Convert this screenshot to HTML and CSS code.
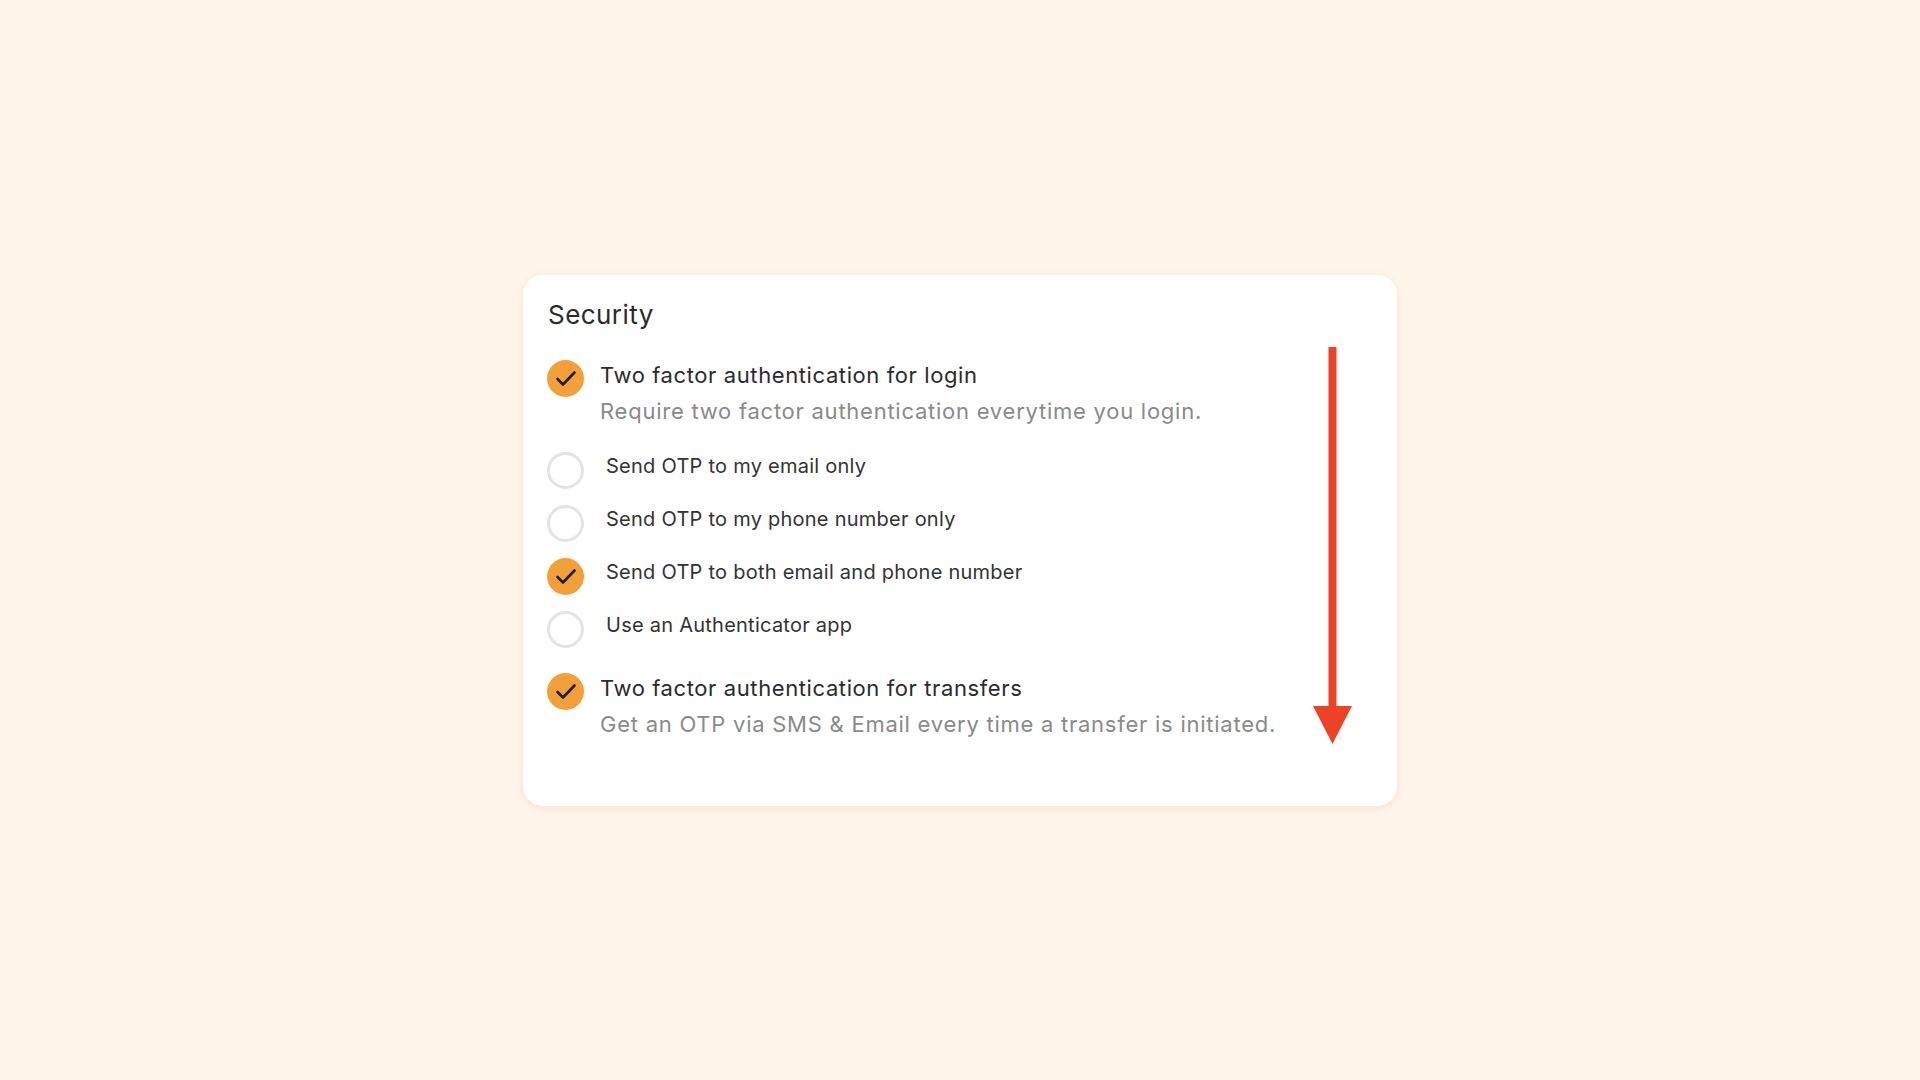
FILE: index.html
```html
<!DOCTYPE html>
<html lang="en">
<head>
    <meta charset="UTF-8">
    <meta name="viewport" content="width=device-width, initial-scale=1.0">
    <title>Security</title>
    <link rel="stylesheet" href="styles.css">
</head>
<body>
    <div class="card">
        <h2>Security</h2>

        <div class="option">
            <span class="check checked">
                <svg viewBox="0 0 37 37"><path d="M10.5 19 L16 24.5 L27.5 12.5"/></svg>
            </span>
            <div class="option-text">
                <p class="option-title">Two factor authentication for login</p>
                <p class="option-desc">Require two factor authentication everytime you login.</p>
            </div>
        </div>

        <ul class="choices">
            <li><span class="check"></span><span>Send OTP to my email only</span></li>
            <li><span class="check"></span><span>Send OTP to my phone number only</span></li>
            <li>
                <span class="check checked">
                    <svg viewBox="0 0 37 37"><path d="M10.5 19 L16 24.5 L27.5 12.5"/></svg>
                </span>
                <span>Send OTP to both email and phone number</span>
            </li>
            <li><span class="check"></span><span>Use an Authenticator app</span></li>
        </ul>

        <div class="option">
            <span class="check checked">
                <svg viewBox="0 0 37 37"><path d="M10.5 19 L16 24.5 L27.5 12.5"/></svg>
            </span>
            <div class="option-text">
                <p class="option-title">Two factor authentication for transfers</p>
                <p class="option-desc">Get an OTP via SMS &amp; Email every time a transfer is initiated.</p>
            </div>
        </div>

        <svg class="arrow" viewBox="0 0 40 398">
            <rect x="15.5" y="0" width="8" height="362"/>
            <polygon points="0,359 39,359 19.5,397"/>
        </svg>
    </div>
</body>
</html>
```

FILE: styles.css
```css
*{
    margin: 0;
    padding: 0;
    box-sizing: border-box;
}
body{
    display: flex;
    justify-content: center;
    align-items: center;
    height: 100vh;
    background-color: #fff5ea;
    font-family: Inter, Lato, sans-serif;
    color: #2b2b2b;
}
.card{
    position: relative;
    width: 874px;
    padding: 24px 24px 68px 24px;
    background-color: #fff;
    border-radius: 20px;
    box-shadow: 0 2px 10px rgba(150, 110, 60, 0.12);
}
h2{
    font-size: 26px;
    line-height: 32px;
    font-weight: 400;
    letter-spacing: 0.45px;
    margin-left: 1px;
    margin-bottom: 29px;
}
.option{
    display: flex;
    gap: 16px;
}
.option-text{
    margin-top: 1px;
}
.option-title{
    font-size: 22px;
    line-height: 28px;
    letter-spacing: 0.6px;
}
.option-desc{
    margin-top: 8px;
    font-size: 22px;
    line-height: 28px;
    letter-spacing: 0.75px;
    color: #8a8a8a;
}
.check{
    flex: none;
    width: 37px;
    height: 37px;
    border-radius: 50%;
    border: 3px solid #e4e4e4;
    background-color: #fff;
}
.check.checked{
    border: none;
    background-color: #f3a03b;
}
.check svg{
    display: block;
    width: 37px;
    height: 37px;
}
.check svg path{
    fill: none;
    stroke: #1d1f2b;
    stroke-width: 2.6;
    stroke-linecap: round;
    stroke-linejoin: round;
}
.choices{
    list-style: none;
    display: flex;
    flex-direction: column;
    gap: 16px;
    margin: 27px 0 25px 0;
}
.choices li{
    display: flex;
    gap: 22px;
    font-size: 20px;
    line-height: 24px;
    letter-spacing: 0.25px;
    color: #333;
}
.choices li span:last-child{
    margin-top: 2px;
}
.arrow{
    position: absolute;
    left: 790px;
    top: 72px;
    width: 40px;
    height: 398px;
    fill: #ec4328;
}
```
